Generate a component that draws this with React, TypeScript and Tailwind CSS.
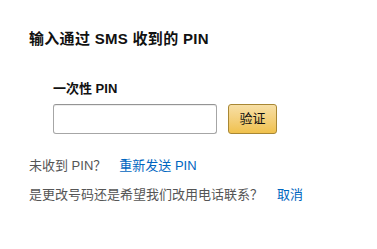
export default function App() {
  return (
    <div
      className="min-h-screen bg-white pl-[29px] pt-[28px] text-[#111]"
      style={{ fontFamily: '"Liberation Sans", "Noto Sans CJK SC", sans-serif' }}
    >
      <h1 className="text-[15px] font-bold leading-[22px] tracking-[0.3px]">输入通过 SMS 收到的 PIN</h1>

      <div className="mt-[30px] ml-[24px]">
        <label className="block text-[13px] font-bold leading-[18px]">一次性 PIN</label>
        <div className="mt-[6px] flex items-center gap-[11px]">
          <input
            type="text"
            className="h-[30px] w-[164px] rounded-[3px] border border-[#a6a6a6] border-t-[#949494] bg-white px-2 text-[13px] shadow-[inset_0_1px_0_rgba(0,0,0,0.07)] outline-none"
          />
          <button className="h-[30px] w-[49px] rounded-[3px] border border-[#a88734] bg-gradient-to-b from-[#f7dfa5] to-[#f0c14b] text-[13px] text-[#111]">
            验证
          </button>
        </div>
      </div>

      <div className="mt-[22px] flex gap-[13px] text-[13px] leading-[20px] text-[#555]">
        <span>未收到 PIN？</span>
        <a href="#" className="text-[#0066c0]">重新发送 PIN</a>
      </div>
      <div className="mt-[9px] flex gap-[14px] text-[13px] leading-[20px] text-[#555]">
        <span>是更改号码还是希望我们改用电话联系？</span>
        <a href="#" className="text-[#0066c0]">取消</a>
      </div>
    </div>
  );
}
